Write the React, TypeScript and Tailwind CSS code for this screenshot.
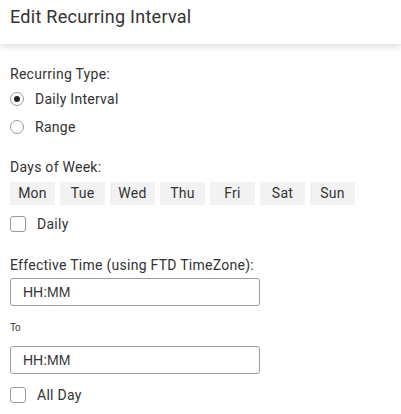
import { useState } from "react";

const days = ["Mon", "Tue", "Wed", "Thu", "Fri", "Sat", "Sun"];

const Radio = ({ checked, label, onClick }: { checked: boolean; label: string; onClick: () => void }) => (
  <div className="flex items-center h-[28px] cursor-pointer" onClick={onClick}>
    <span className="w-[14px] h-[14px] rounded-full border border-[#9a9a9a] flex items-center justify-center bg-white">
      {checked && <span className="w-[6px] h-[6px] rounded-full bg-[#222]" />}
    </span>
    <span className="ml-[11px] text-[14px] leading-[20px]">{label}</span>
  </div>
);

const Checkbox = ({ label }: { label: string }) => {
  const [checked, setChecked] = useState(false);
  return (
    <div className="flex items-center h-[28px] cursor-pointer" onClick={() => setChecked(!checked)}>
      <span className="w-[16px] h-[16px] rounded-[3px] border border-[#9a9a9a] bg-white flex items-center justify-center text-[11px]">
        {checked ? "✓" : ""}
      </span>
      <span className="ml-[11px] text-[14px] leading-[20px]">{label}</span>
    </div>
  );
};

const TimeInput = () => (
  <input
    placeholder="HH:MM"
    className="block w-[250px] h-[28px] border border-[#9e9e9e] rounded-[3px] px-[12px] text-[14px] tracking-normal text-[#333] placeholder:text-[#333] outline-none font-['Liberation_Sans',Arial,sans-serif]"
  />
);

export default function App() {
  const [type, setType] = useState("daily");

  return (
    <div className="w-[401px] h-[414px] bg-white text-[#333] tracking-[0.27px] font-['Roboto','Liberation_Sans',sans-serif] overflow-hidden">
      <div className="h-[44px] px-[10px] pt-[6px] shadow-[0_3px_6px_rgba(0,0,0,0.12)] relative">
        <h1 className="text-[18px] leading-[21px]">Edit Recurring Interval</h1>
      </div>

      <div className="px-[10px] pt-[20px]">
        <div className="text-[14px] leading-[20px]">Recurring Type:</div>
        <div className="mt-px">
          <Radio checked={type === "daily"} label="Daily Interval" onClick={() => setType("daily")} />
          <Radio checked={type === "range"} label="Range" onClick={() => setType("range")} />
        </div>

        <div className="mt-[16px] text-[14px] leading-[20px]">Days of Week:</div>
        <div className="mt-[5px] flex gap-[5px]">
          {days.map((day) => (
            <button
              key={day}
              className="w-[45px] h-[23px] bg-[#f2f2f2] text-[14px] leading-[23px] text-center"
            >
              {day}
            </button>
          ))}
        </div>
        <div className="mt-[5px]">
          <Checkbox label="Daily" />
        </div>

        <div className="mt-[17px] text-[14px] leading-[20px]">Effective Time (using FTD TimeZone):</div>
        <div className="mt-[3px]">
          <TimeInput />
        </div>
        <div className="mt-[16px] text-[10px] leading-[12px] tracking-normal font-['Liberation_Sans',Arial,sans-serif]">To</div>
        <div className="mt-[12px]">
          <TimeInput />
        </div>
        <div className="mt-[7px]">
          <Checkbox label="All Day" />
        </div>
      </div>
    </div>
  );
}
